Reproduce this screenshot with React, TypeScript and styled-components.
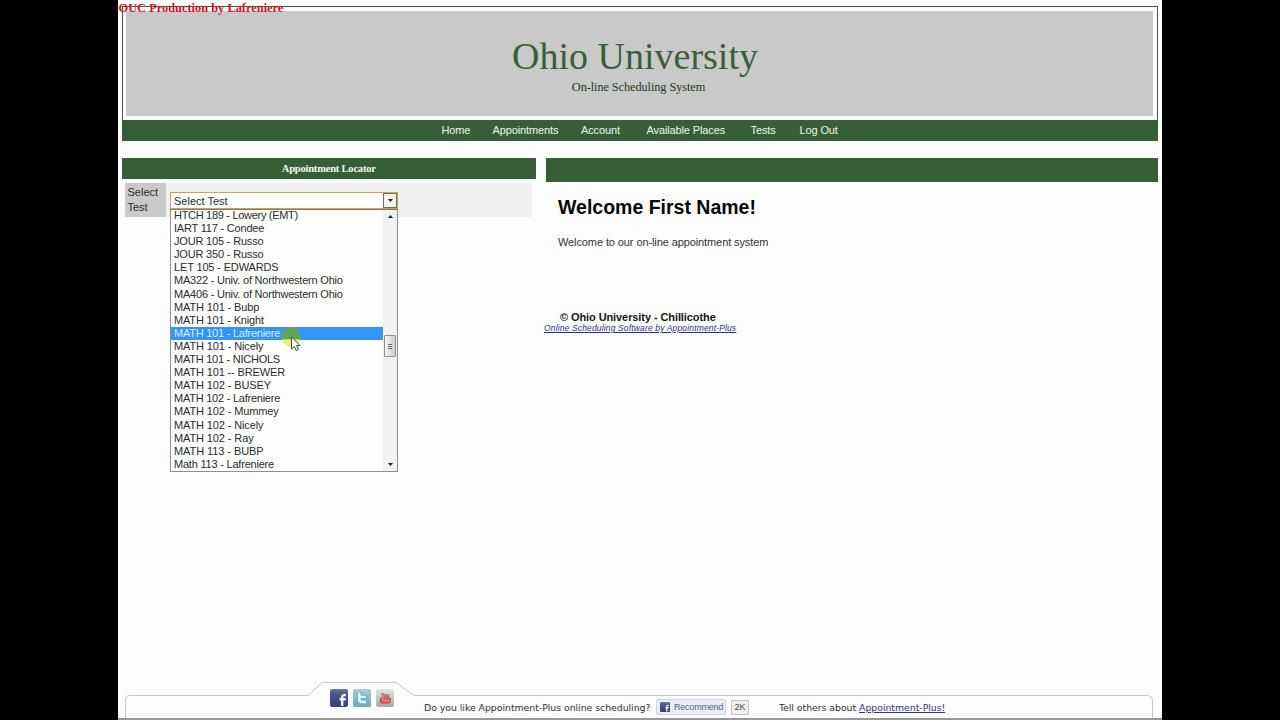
import React from "react";
import styled, { createGlobalStyle } from "styled-components";

const GREEN = "#375f37";

const GlobalStyle = createGlobalStyle`
  * { box-sizing: border-box; }
  html, body { margin: 0; padding: 0; background: #000; }
  body { width: 1280px; height: 720px; overflow: hidden; font-family: "Liberation Sans", Arial, sans-serif; }
`;

const Page = styled.div`
  position: relative;
  display: flex;
  flex-direction: column;
  width: 1044px;
  height: 720px;
  margin-left: 118px;
  padding: 6px 4px 0 3.5px;
  background: #fdfdfd;
  overflow: hidden;
`;

const Watermark = styled.div`
  position: absolute;
  left: 0.5px;
  top: 0;
  font: bold 12.4px/16px "Liberation Serif", "Times New Roman", serif;
  color: #d3121c;
  white-space: nowrap;
`;

const Banner = styled.header`
  flex: none;
  height: 114px;
  padding: 4px 4px 3px 3.5px;
  border: 1.5px solid ${GREEN};
  border-bottom: 0;
`;

const BannerFill = styled.div`
  display: flex;
  flex-direction: column;
  align-items: center;
  height: 105px;
  padding: 22px 9px 0 0;
  background: #c9c9c9;
  font-family: "Liberation Serif", "Times New Roman", serif;
  white-space: nowrap;
`;

const University = styled.h1`
  margin: 0;
  font-size: 38px;
  line-height: 46px;
  font-weight: 400;
  color: ${GREEN};
`;

const Tagline = styled.div`
  margin-left: 7px;
  font-size: 12.3px;
  line-height: 16px;
  letter-spacing: -0.08px;
  color: #1d3a20;
`;

const Nav = styled.nav`
  flex: none;
  display: flex;
  height: 21px;
  padding-left: 320px;
  background: ${GREEN};
`;

const NavLink = styled.a<{ $w: number }>`
  width: ${(p) => p.$w}px;
  font-size: 11px;
  line-height: 21px;
  letter-spacing: -0.12px;
  color: #eef5ee;
  white-space: nowrap;
`;

const Columns = styled.main`
  flex: none;
  display: flex;
  gap: 10px;
  margin-top: 17px;
`;

const Locator = styled.section`
  width: 414.5px;
`;

const PanelTitle = styled.div`
  height: 21px;
  background: ${GREEN};
  color: #f4f8f4;
  font: bold 10.5px/21px "Liberation Serif", "Times New Roman", serif;
  letter-spacing: -0.2px;
  text-align: center;
`;

const FormRow = styled.div`
  display: flex;
  height: 34px;
  margin: 4px 4px 0 3.5px;
  background: #efefef;
`;

const FieldLabel = styled.label`
  width: 41px;
  padding: 2px 0 0 2.5px;
  background: #cacaca;
  font-size: 11px;
  line-height: 15px;
  color: #2b2b2b;
`;

const Picker = styled.div`
  position: relative;
  width: 228px;
  height: 17px;
  margin: 9px 0 0 4px;
`;

const PickerBox = styled.div`
  display: flex;
  justify-content: space-between;
  height: 17px;
  padding-left: 3px;
  border: 1px solid #c9a64a;
  background: #fefefe;
  font-size: 11px;
  line-height: 16px;
  color: #2b2b2b;
`;

const PickerArrow = styled.span`
  display: flex;
  align-items: center;
  justify-content: center;
  width: 14px;
  height: 15px;
  border: 1px solid #6f6f66;
  background: #f4f4f0;
`;

const Menu = styled.div`
  position: absolute;
  left: 0;
  top: 17px;
  display: flex;
  width: 228px;
  height: 263px;
  border: 1px solid #8b9198;
  border-top-color: #77797c;
  background: #fefefe;
`;

const Options = styled.ul`
  flex: 1;
  margin: -1px 0 0;
  padding: 0;
  list-style: none;
`;

const Option = styled.li<{ $on?: boolean; $s: number }>`
  height: 13.1px;
  padding-left: 3px;
  font-size: 11px;
  line-height: 13px;
  letter-spacing: ${(p) => p.$s}px;
  white-space: nowrap;
  color: ${(p) => (p.$on ? "#d9ecff" : "#2b2b2b")};
  background: ${(p) => (p.$on ? "#3296f8" : "transparent")};
`;

const Scrollbar = styled.div`
  display: flex;
  flex-direction: column;
  align-items: center;
  width: 14px;
  padding: 5px 0 5px;
  background: #f1f1f1;
`;

const Thumb = styled.div`
  display: flex;
  flex-direction: column;
  justify-content: center;
  gap: 1px;
  width: 12px;
  height: 22px;
  margin-top: 117px;
  margin-bottom: auto;
  padding: 0 3px;
  border: 1px solid #8f8f8f;
  border-radius: 1px;
  background: linear-gradient(90deg, #f4f4f4, #cfcfcf);
`;

const Grip = styled.i`
  height: 1px;
  background: #6b6b6b;
`;

const Pointer = styled.svg`
  position: absolute;
  left: 109px;
  top: 134px;
`;

const Main = styled.section`
  flex: 1;
`;

const MainBar = styled.div`
  height: 24px;
  background: ${GREEN};
`;

const Welcome = styled.h2`
  margin: 13px 0 0 12px;
  font-size: 19.5px;
  line-height: 24px;
  font-weight: 700;
  color: #070707;
`;

const Intro = styled.p`
  margin: 16px 0 0 12px;
  font-size: 11px;
  line-height: 15px;
  letter-spacing: -0.1px;
  color: #333;
`;

const Copyright = styled.p`
  margin: 61px 0 0 14px;
  font-size: 11px;
  line-height: 13px;
  font-weight: 700;
  letter-spacing: -0.09px;
  color: #161616;
`;

const Credit = styled.a`
  display: block;
  margin: -1px 0 0 -2px;
  font-size: 8.5px;
  line-height: 10px;
  letter-spacing: 0.15px;
  font-style: italic;
  text-decoration: underline;
  color: #2d2d96;
`;

const Footer = styled.footer`
  position: absolute;
  left: 0;
  bottom: 0;
  width: 1044px;
  height: 40px;
  border-bottom: 2px solid #979797;
`;

const FooterOutline = styled.svg`
  display: block;
  height: 38px;
`;

const Social = styled.div`
  position: absolute;
  left: 212px;
  top: 9px;
  display: flex;
  gap: 5px;
`;

const FooterText = styled.div`
  position: absolute;
  left: 306px;
  top: 19px;
  display: flex;
  align-items: center;
  height: 16px;
  font: 9.4px/16px "DejaVu Sans", Verdana, sans-serif;
  letter-spacing: -0.05px;
  color: #303030;
  white-space: nowrap;
`;

const Question = styled.span`
  width: 232px;
  padding-top: 2px;
`;

const Recommend = styled.span`
  display: flex;
  align-items: center;
  gap: 4px;
  width: 70px;
  height: 16px;
  padding-left: 3px;
  border: 1px solid #cbd4e4;
  border-radius: 2px;
  background: #eceef5;
  font: 9px/14px "Liberation Sans", Arial, sans-serif;
  letter-spacing: -0.22px;
  color: #4d6090;
`;

const Count = styled.span`
  width: 18px;
  height: 15px;
  margin-left: 5px;
  border: 1px solid #c2c2c2;
  background: #f0f0f0;
  font: 9px/13px "Liberation Sans", Arial, sans-serif;
  letter-spacing: 0;
  text-align: center;
  color: #444;
`;

const Tell = styled.span`
  margin-left: 30px;
  padding-top: 2px;
`;

const PlusLink = styled.a`
  color: #35327c;
  text-decoration: underline;
`;

const nav: [string, number][] = [
  ["Home", 51],
  ["Appointments", 88.5],
  ["Account", 65.5],
  ["Available Places", 104],
  ["Tests", 49],
  ["Log Out", 50],
];

const options: [string, number][] = [
  ["HTCH 189 - Lowery (EMT)", -0.3],
  ["IART 117 - Condee", -0.2],
  ["JOUR 105 - Russo", -0.18],
  ["JOUR 350 - Russo", -0.18],
  ["LET 105 - EDWARDS", -0.15],
  ["MA322 - Univ. of Northwestern Ohio", -0.21],
  ["MA406 - Univ. of Northwestern Ohio", -0.21],
  ["MATH 101 - Bubp", -0.14],
  ["MATH 101 - Knight", -0.17],
  ["MATH 101 - Lafreniere", -0.24],
  ["MATH 101 - Nicely", -0.12],
  ["MATH 101 - NICHOLS", -0.25],
  ["MATH 101 -- BREWER", -0.14],
  ["MATH 102 - BUSEY", -0.12],
  ["MATH 102 - Lafreniere", -0.24],
  ["MATH 102 - Mummey", -0.12],
  ["MATH 102 - Nicely", -0.12],
  ["MATH 102 - Ray", -0.11],
  ["MATH 113 - BUBP", -0.07],
  ["Math 113 - Lafreniere", -0.21],
];

const Triangle = ({ up }: { up?: boolean }) => (
  <svg width="5" height="3" viewBox="0 0 5 3">
    <path d={up ? "M0 3L2.5 0L5 3Z" : "M0 0H5L2.5 3Z"} fill="#222" />
  </svg>
);

const FacebookMark = ({ size }: { size: number }) => (
  <svg width={size} height={size} viewBox="0 0 18 18">
    <defs>
      <linearGradient id="fb" x1="0" y1="0" x2="0" y2="1">
        <stop offset="0" stopColor="#6b7ba5" />
        <stop offset="0.3" stopColor="#43558a" />
        <stop offset="1" stopColor="#35446f" />
      </linearGradient>
    </defs>
    <rect width="18" height="18" rx="2" fill="url(#fb)" />
    <path d="M12.2 17V7.6Q12.2 5.8 15.8 6M9.6 10.2H15.8" fill="none" stroke="#f3f5fb" strokeWidth="2.4" />
  </svg>
);

const TwitterMark = () => (
  <svg width="18" height="18" viewBox="0 0 18 18">
    <defs>
      <linearGradient id="tw" x1="0" y1="0" x2="0" y2="1">
        <stop offset="0" stopColor="#a9cdd0" />
        <stop offset="1" stopColor="#6fa9ad" />
      </linearGradient>
    </defs>
    <rect width="18" height="18" rx="2" fill="url(#tw)" />
    <path d="M6.3 4.6V10.4Q6.3 13 9 13H12M6.3 7.8H12" fill="none" stroke="#4fc0dc" strokeWidth="4.4" strokeLinecap="round" />
    <path d="M6.3 4.6V10.4Q6.3 13 9 13H12M6.3 7.8H12" fill="none" stroke="#f2fcff" strokeWidth="2.3" strokeLinecap="round" />
  </svg>
);

const TubeText = styled.text`
  font: bold 6px "Liberation Sans", Arial, sans-serif;
  letter-spacing: 0;
`;

const YouTubeMark = () => (
  <svg width="18" height="18" viewBox="0 0 18 18">
    <defs>
      <linearGradient id="yt" x1="0" y1="0" x2="0" y2="1">
        <stop offset="0" stopColor="#e3e3e1" />
        <stop offset="1" stopColor="#acaaa8" />
      </linearGradient>
    </defs>
    <rect width="18" height="18" rx="2" fill="url(#yt)" />
    <TubeText x="5" y="7.8" fill="#5c4545" textLength="8" lengthAdjust="spacingAndGlyphs">You</TubeText>
    <rect x="3.8" y="8.2" width="11" height="6.4" rx="2" fill="#dc4048" />
    <TubeText x="5.2" y="13.4" fill="#f0a9ac" textLength="8.4" lengthAdjust="spacingAndGlyphs">Tube</TubeText>
  </svg>
);

export default function App() {
  return (
    <>
      <GlobalStyle />
      <Page>
        <Banner>
          <BannerFill>
            <University>Ohio University</University>
            <Tagline>On-line Scheduling System</Tagline>
          </BannerFill>
        </Banner>
        <Nav>
          {nav.map(([t, w]) => (
            <NavLink key={t} $w={w}>{t}</NavLink>
          ))}
        </Nav>
        <Columns>
          <Locator>
            <PanelTitle>Appointment Locator</PanelTitle>
            <FormRow>
              <FieldLabel>Select<br />Test</FieldLabel>
              <Picker>
                <PickerBox>
                  Select Test
                  <PickerArrow><Triangle /></PickerArrow>
                </PickerBox>
                <Menu>
                  <Options>
                    {options.map(([o, s]) => (
                      <Option key={o} $s={s} $on={o === "MATH 101 - Lafreniere"}>{o}</Option>
                    ))}
                  </Options>
                  <Scrollbar>
                    <Triangle up />
                    <Thumb><Grip /><Grip /><Grip /></Thumb>
                    <Triangle />
                  </Scrollbar>
                </Menu>
                <Pointer width="26" height="28" viewBox="0 0 26 28">
                  <circle cx="12" cy="11" r="9.5" fill="#dfe94a" opacity="0.75" />
                  <path d="M3.2 7.4A9.5 9.5 0 0 1 21.3 9V13H3Q2.2 10 3.2 7.4Z" fill="#4f9e50" opacity="0.85" />
                  <path d="M12.5 11V23L15.3 20.4L17.3 24.6L19.5 23.6L17.5 19.6H21.1Z" fill="#fff" stroke="#4a4450" strokeWidth="1" />
                </Pointer>
              </Picker>
            </FormRow>
          </Locator>
          <Main>
            <MainBar />
            <Welcome>Welcome First Name!</Welcome>
            <Intro>Welcome to our on-line appointment system</Intro>
            <Copyright>© Ohio University - Chillicothe</Copyright>
            <Credit>Online Scheduling Software by Appointment-Plus</Credit>
          </Main>
        </Columns>
        <Watermark>OUC Production by Lafreniere</Watermark>
        <Footer>
          <FooterOutline width="1044" height="38" viewBox="0 0 1044 38">
            <path
              d="M7.5 38V20Q7.5 15.5 12 15.5H190L204 2.5H278L296 15.5H1029Q1034.5 15.5 1034.5 21V38"
              fill="none"
              stroke="#c6c9c6"
            />
          </FooterOutline>
          <Social>
            <FacebookMark size={18} />
            <TwitterMark />
            <YouTubeMark />
          </Social>
          <FooterText>
            <Question>Do you like Appointment-Plus online scheduling?</Question>
            <Recommend><FacebookMark size={10} />Recommend</Recommend>
            <Count>2K</Count>
            <Tell>Tell others about <PlusLink>Appointment-Plus!</PlusLink></Tell>
          </FooterText>
        </Footer>
      </Page>
    </>
  );
}
